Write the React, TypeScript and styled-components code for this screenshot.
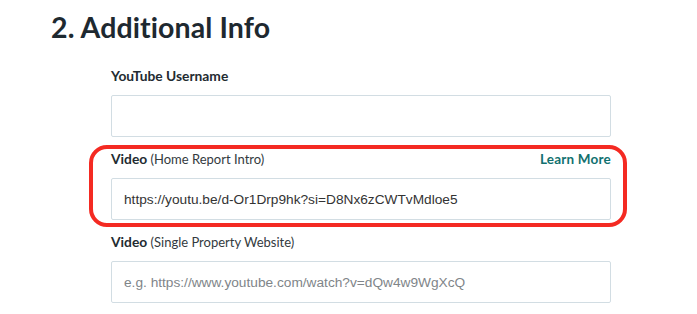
import * as React from 'react';
import styled, { createGlobalStyle } from 'styled-components';

const GlobalStyle = createGlobalStyle`
    html, body {
        margin: 0;
        padding: 0;
        background: #ffffff;
    }
    body {
        font-family: Lato, "Open Sans", Arial, sans-serif;
        color: #2b3238;
    }
`;

const Page = styled.div`
    padding: 10px 0 0 51px;
`;

const Heading = styled.h2`
    margin: 0;
    font-size: 28.5px;
    line-height: 34px;
    font-weight: 700;
    color: #1e2930;
    letter-spacing: 0.1px;
`;

const Form = styled.div`
    display: flex;
    flex-direction: column;
    gap: 13px;
    width: 500px;
    margin: 23px 0 0 60px;
`;

const Field = styled.div`
    position: relative;
    display: flex;
    flex-direction: column;
    gap: 10px;
`;

const LabelRow = styled.div`
    display: flex;
    justify-content: space-between;
    align-items: baseline;
    height: 18px;
    line-height: 18px;
    font-size: 13px;
`;

const Label = styled.label`
    color: #333a40;
    font-weight: 400;
    b {
        font-size: 13.8px;
        font-weight: 700;
        color: #232b31;
    }
`;

const LearnMore = styled.a`
    color: #11716f;
    font-weight: 700;
    font-size: 13.5px;
    text-decoration: none;
    letter-spacing: 0.2px;
`;

const Input = styled.input`
    box-sizing: border-box;
    width: 100%;
    height: 42px;
    padding: 0 12px;
    border: 1px solid #d2dde3;
    border-radius: 2px;
    font-family: "Liberation Sans", Arial, sans-serif;
    font-size: 13.7px;
    color: #333;
    outline: none;
    &::placeholder {
        color: #808589;
    }
`;

const Highlight = styled.div`
    position: absolute;
    top: -5px;
    bottom: -7px;
    left: -22px;
    right: -16px;
    border: 4px solid #f42a22;
    border-radius: 18px;
    pointer-events: none;
`;

export default function App() {
    return (
        <>
            <GlobalStyle />
            <Page>
                <Heading>2. Additional Info</Heading>
                <Form>
                    <Field>
                        <LabelRow>
                            <Label><b>YouTube Username</b></Label>
                        </LabelRow>
                        <Input />
                    </Field>
                    <Field>
                        <Highlight />
                        <LabelRow>
                            <Label><b>Video</b> (Home Report Intro)</Label>
                            <LearnMore href="#">Learn More</LearnMore>
                        </LabelRow>
                        <Input defaultValue="https://youtu.be/d-Or1Drp9hk?si=D8Nx6zCWTvMdloe5" />
                    </Field>
                    <Field>
                        <LabelRow>
                            <Label><b>Video</b> (Single Property Website)</Label>
                        </LabelRow>
                        <Input placeholder="e.g. https://www.youtube.com/watch?v=dQw4w9WgXcQ" />
                    </Field>
                </Form>
            </Page>
        </>
    );
}
